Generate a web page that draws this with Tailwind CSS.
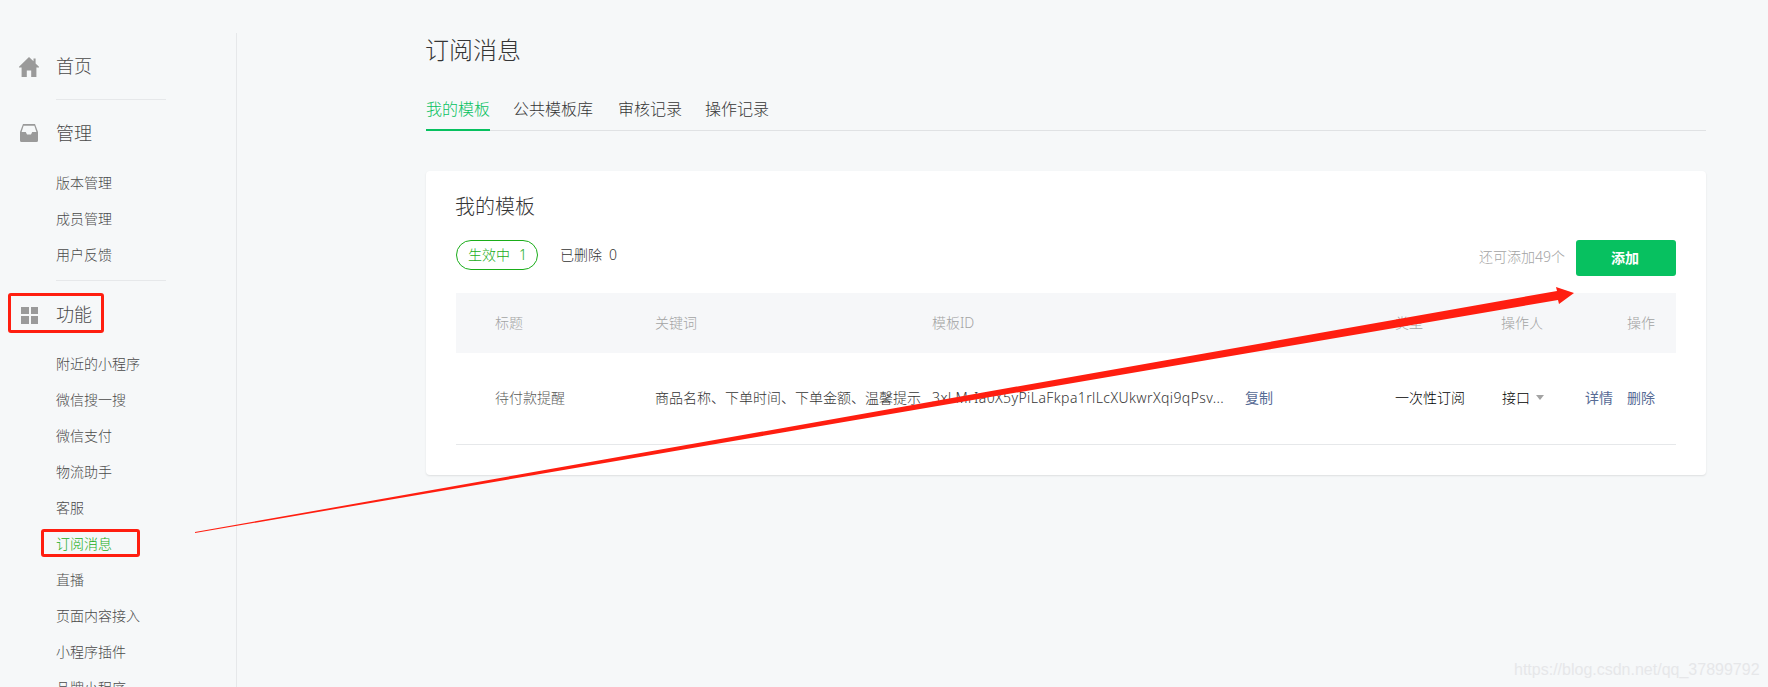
<!DOCTYPE html>
<html lang="zh-CN">
<head>
    <meta charset="UTF-8">
    <title>订阅消息</title>
    <script src="https://cdn.jsdelivr.net/npm/@tailwindcss/browser@4"></script>
</head>
<body class="bg-[#f6f8f9] h-[687px] overflow-hidden relative font-['Noto_Sans','Noto_Sans_CJK_SC',sans-serif] font-light text-[#353535]">

    <div class="flex h-[687px] overflow-hidden">
        <!-- sidebar -->
        <aside class="w-[237px] h-[654px] mt-[33px] shrink-0 border-r border-[#e6e8ea] pt-[10px] text-sm text-[#4a4a4a] overflow-hidden">
            <div class="h-12 flex items-center text-lg">
                <span class="w-[56px] pl-[19px]">
                    <svg class="w-5 h-5" viewBox="0 0 20 20" fill="#9a9a9a"><path d="M10 0 L14.5 4.3 V1.6 H16.6 V6.4 L20 9.8 V10.6 H17.4 V20 H12.2 V13.6 H7.8 V20 H2.6 V10.6 H0 V9.8 Z"/></svg>
                </span>
                <span class="mb-[2px]">首页</span>
            </div>
            <div class="ml-[56px] w-[110px] h-px bg-[#e6e8ea] mt-2"></div>

            <div class="h-12 flex items-center text-lg mt-[9px]">
                <span class="w-[56px] pl-[20px]">
                    <svg class="w-[18px] h-[18px]" viewBox="0 0 18 18" fill="#9a9a9a"><path d="M3 0 H15 L18 8 V16.5 Q18 18 16.5 18 H1.5 Q0 18 0 16.5 V8 Z M3.6 1.8 L1.6 8 H5.8 L7 10.6 H11 L12.2 8 H16.4 L14.4 1.8 Z" fill-rule="evenodd"/></svg>
                </span>
                管理
            </div>
            <ul class="mt-2 pl-[56px]">
                <li class="h-9 leading-9">版本管理</li>
                <li class="h-9 leading-9">成员管理</li>
                <li class="h-9 leading-9">用户反馈</li>
            </ul>
            <div class="ml-[56px] w-[110px] h-px bg-[#e6e8ea] mt-[7px]"></div>

            <div class="h-12 flex items-center text-lg mt-[10px]">
                <span class="w-[56px] pl-[21px]">
                    <span class="grid grid-cols-2 gap-[2px] w-[17px]">
                        <i class="h-[7.5px] bg-[#9a9a9a]"></i><i class="h-[7.5px] bg-[#9a9a9a]"></i>
                        <i class="h-[7.5px] bg-[#9a9a9a]"></i><i class="h-[7.5px] bg-[#9a9a9a]"></i>
                    </span>
                </span>
                <span class="mb-[2px]">功能</span>
            </div>
            <ul class="mt-2 pl-[56px]">
                <li class="h-9 leading-[34px]">附近的小程序</li>
                <li class="h-9 leading-[34px]">微信搜一搜</li>
                <li class="h-9 leading-[34px]">微信支付</li>
                <li class="h-9 leading-[34px]">物流助手</li>
                <li class="h-9 leading-[34px]">客服</li>
                <li class="h-9 leading-[34px] text-[#1aad19]">订阅消息</li>
                <li class="h-9 leading-[34px]">直播</li>
                <li class="h-9 leading-[34px]">页面内容接入</li>
                <li class="h-9 leading-[34px]">小程序插件</li>
                <li class="h-9 leading-[34px]">品牌小程序</li>
            </ul>
        </aside>

        <!-- main -->
        <main class="w-[1280px] ml-[189px] shrink-0 pt-[35px]">
            <h1 class="text-2xl leading-[30px] -ml-px">订阅消息</h1>
            <nav class="flex gap-6 mt-[33px] h-[33px] border-b border-[#e0e2e4] text-base">
                <a class="h-[33px] leading-[22px] border-b-2 border-[#07c160] text-[#07c160]">我的模板</a>
                <a class="leading-[22px] -ml-px">公共模板库</a>
                <a class="leading-[22px] ml-px">审核记录</a>
                <a class="leading-[22px] -ml-px">操作记录</a>
            </nav>

            <section class="mt-10 bg-white rounded shadow-[0_1px_2px_rgba(0,0,0,0.1)] px-[30px] pt-[22px] pb-[30px]">
                <h2 class="text-xl leading-7 -ml-px">我的模板</h2>
                <div class="flex justify-between items-start mt-[19px]">
                    <div class="flex items-center text-sm">
                        <span class="w-[82px] h-[30px] flex items-center pl-[11px] rounded-full border border-[#1aad19] text-[#1aad19]">生效中<span class="ml-[9px]">1</span></span>
                        <span class="ml-[22px]">已删除<span class="ml-[7px]">0</span></span>
                    </div>
                    <div class="flex items-center">
                        <span class="text-sm text-[#a3a3a3] mr-[11px] mb-[2px]">还可添加49个</span>
                        <button class="w-[100px] h-9 pr-[2px] bg-[#07c160] rounded-[3px] text-white text-sm font-bold">添加</button>
                    </div>
                </div>

                <div class="mt-[17px] text-sm">
                    <div class="h-[60px] bg-[#f6f7f9] text-[#a3a3a3] grid grid-cols-[199px_277px_463px_106px_1fr] items-center">
                        <span class="pl-[39px]">标题</span>
                        <span>关键词</span>
                        <span>模板ID</span>
                        <span>类型</span>
                        <span class="flex justify-between pr-[21px]"><span>操作人</span><span>操作</span></span>
                    </div>
                    <div class="h-[92px] pb-[2px] border-b border-[#e6e8ea] grid grid-cols-[199px_277px_463px_106px_1fr] items-center">
                        <span class="pl-[39px] text-[#5a5a5a]">待付款提醒</span>
                        <span class="whitespace-nowrap">商品名称、下单时间、下单金额、温馨提示</span>
                        <span class="flex">
                            <span class="w-[313px] whitespace-nowrap tracking-[0.4px]">3xLMrIa0X5yPiLaFkpa1rlLcXUkwrXqi9qPsv...</span>
                            <a class="text-[#576b95] font-normal">复制</a>
                        </span>
                        <span class="text-black">一次性订阅</span>
                        <span class="flex items-center pr-[21px]">
                            <span class="ml-px text-black">接口</span>
                            <i class="ml-[6px] w-0 h-0 border-x-4 border-x-transparent border-t-[5px] border-t-[#a3a3a3]"></i>
                            <a class="ml-auto text-[#576b95] font-normal">详情</a>
                            <a class="ml-[14px] text-[#576b95] font-normal">删除</a>
                        </span>
                    </div>
                </div>
            </section>
        </main>
    </div>

    <!-- annotations drawn over the screenshot -->
    <div class="absolute left-[8px] top-[293px] w-[96px] h-[40px] border-[3px] border-[#ff1e10] rounded-[3px]"></div>
    <div class="absolute left-[41px] top-[529px] w-[99px] h-[28px] border-[3px] border-[#ff1e10] rounded-[3px]"></div>
    <svg class="absolute left-0 top-0" width="1768" height="687" viewBox="0 0 1768 687" fill="#ff1e10">
        <polygon points="195,532 195,533 1558,300 1559,304 1574,293 1556,287 1557,291"/>
    </svg>
    <span class="absolute left-[1514px] top-[660px] text-base leading-5 text-[#e6e7e9] font-['Liberation_Sans',sans-serif] font-normal">https://blog.csdn.net/qq_37899792</span>

</body>
</html>
